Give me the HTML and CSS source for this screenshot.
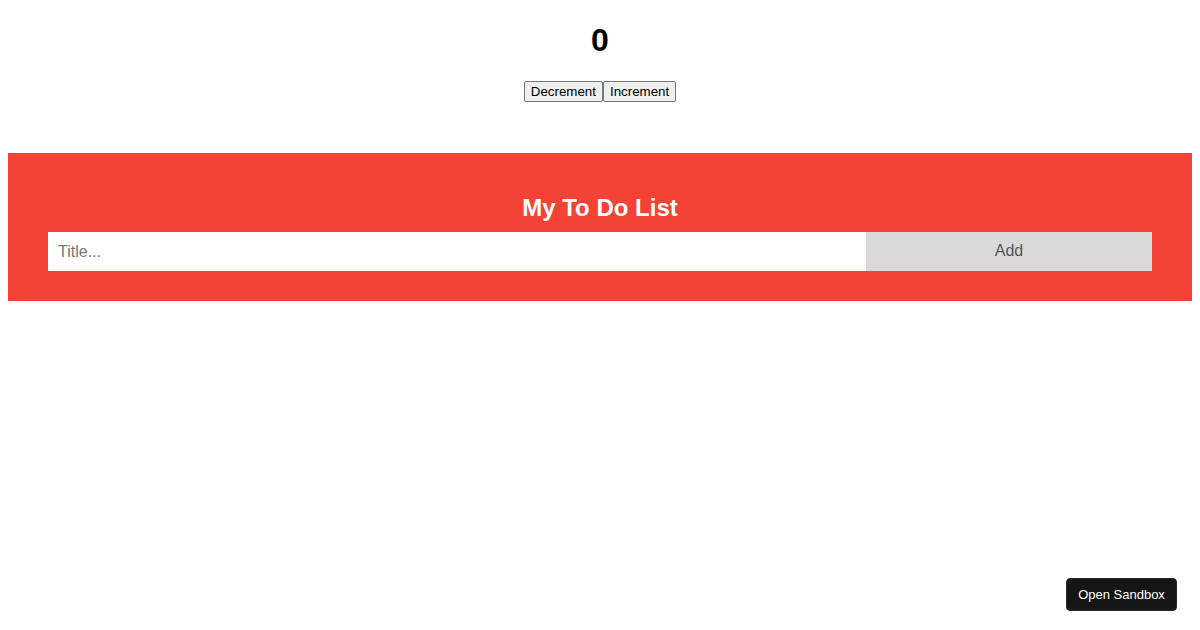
FILE: index.html
```html
<!DOCTYPE html>
<html>
<head>
<meta charset="utf-8">
<link rel="stylesheet" href="styles.css">
</head>
<body>
<div class="counter">
  <h1 class="count">0</h1>
  <div class="controls"><button class="ctl">Decrement</button><button class="ctl">Increment</button></div>
</div>
<div class="header">
  <h2 class="title">My To Do List</h2>
  <div class="add-row">
    <input class="title-input" type="text" placeholder="Title...">
    <span class="add-btn">Add</span>
  </div>
</div>
<button class="sandbox">Open Sandbox</button>
</body>
</html>
```
FILE: styles.css
```css
html, body {
  background: #fff;
}
body {
  margin: 8px;
  font-family: "Liberation Sans", Arial, sans-serif;
}
.counter {
  text-align: center;
}
.count {
  font-size: 32px;
  font-weight: bold;
  margin: 14px 0 22px;
  color: #000;
}
.controls {
  display: flex;
  justify-content: center;
}
.ctl {
  font-family: "Liberation Sans", Arial, sans-serif;
  font-size: 13.33px;
  color: #000;
  background: #efefef;
  border: 1px solid #767676;
  border-radius: 2px;
  padding: 2px 6px;
  margin: 0;
  height: 21px;
}
.header {
  margin-top: 51px;
  background: #f44336;
  padding: 30px 40px;
  color: #fff;
  text-align: center;
}
.title {
  font-size: 24px;
  font-weight: bold;
  margin: 11px 0 10px;
}
.add-row {
  display: flex;
}
.title-input {
  flex: 1;
  min-width: 0;
  margin: 0;
  border: none;
  border-radius: 0;
  padding: 10px;
  height: 39px;
  box-sizing: border-box;
  font-size: 16px;
  font-family: "Liberation Sans", Arial, sans-serif;
  outline: none;
}
.title-input::placeholder {
  color: #757575;
}
.add-btn {
  width: 286px;
  height: 39px;
  box-sizing: border-box;
  padding: 10px;
  background: #d9d9d9;
  color: #555;
  font-size: 16px;
  text-align: center;
}
.sandbox {
  position: fixed;
  right: 23px;
  bottom: 19px;
  width: 111px;
  height: 33px;
  background: #151515;
  color: #fff;
  border: 1px solid #2a2a2a;
  border-radius: 4px;
  font-family: "Liberation Sans", Arial, sans-serif;
  font-size: 13px;
  padding: 0;
}
```
